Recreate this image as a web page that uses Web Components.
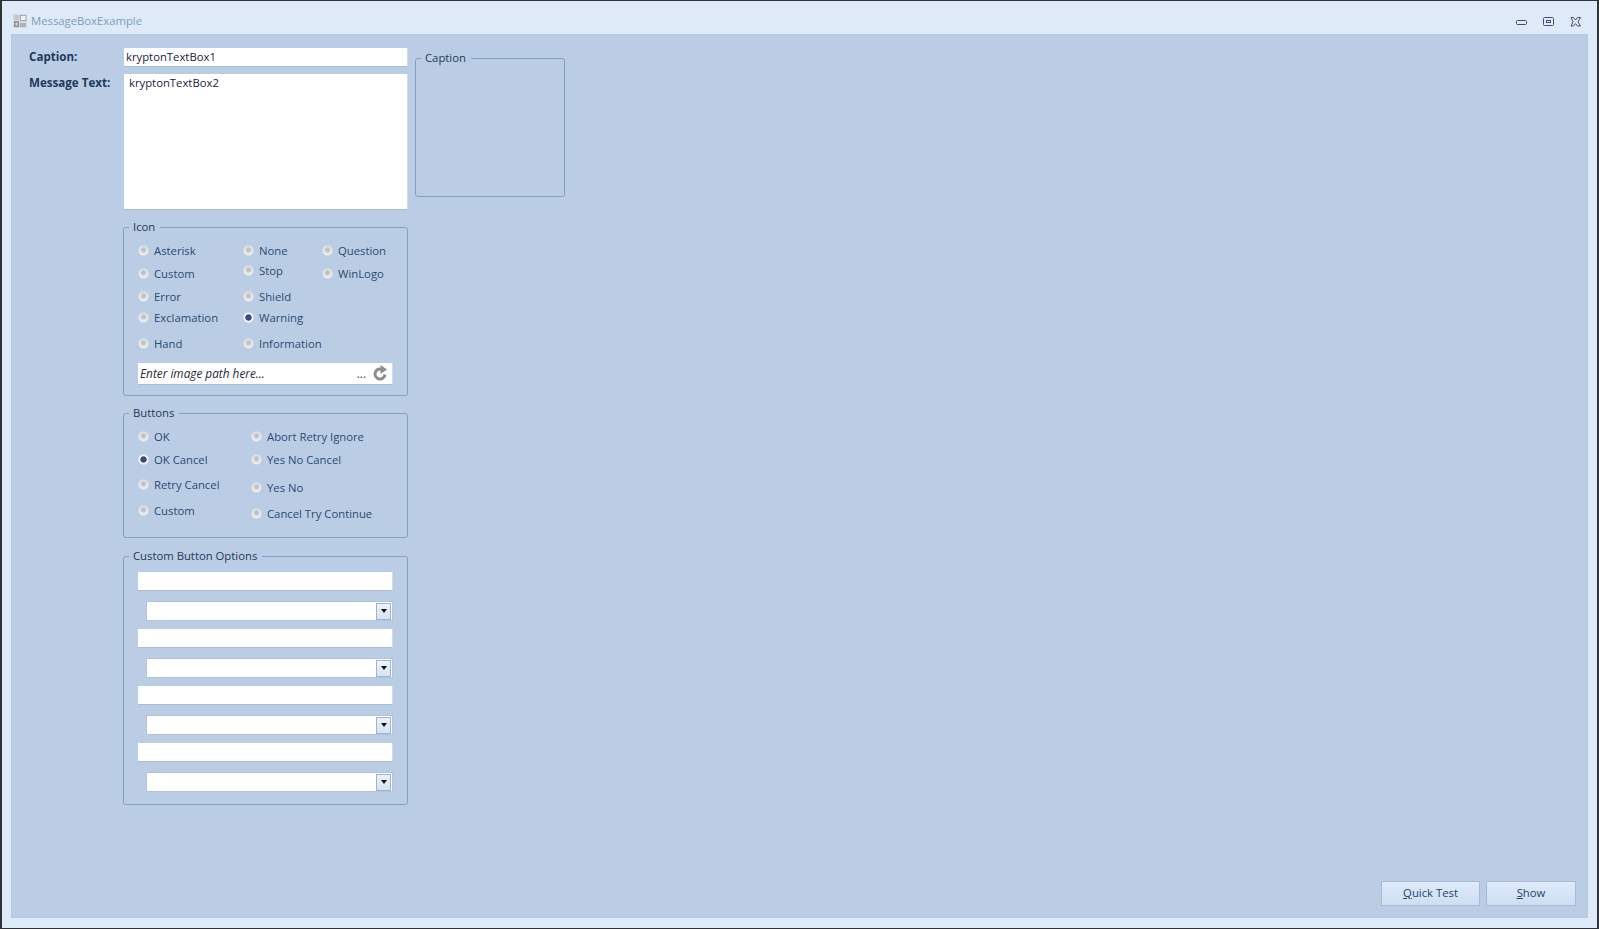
<!DOCTYPE html>
<html lang="en"><head><meta charset="utf-8"><title>MessageBoxExample</title>
<style>
html,body{margin:0;height:100%;overflow:hidden;background:#2f3338}
body{font:11.3px "Open Sans","Noto Sans",sans-serif;color:#1e395b}
</style></head><body>
<template id="t-window"><style>
:host{display:flex;flex-direction:column;box-sizing:border-box;width:1599px;height:929px;padding:1px 2px 1px 2px;background:#2f3338}
.frame{flex:1;display:flex;flex-direction:column;background:#deeaf7;min-height:0}
.bar{display:flex;align-items:center;box-sizing:border-box;height:33px;padding:6px 0 0 11px;flex:none}
.ttl{margin-left:4px;color:#7f9cc0;font-size:11.3px;flex:1}
.wb{display:flex;align-items:center;gap:15px;margin-right:15px;margin-top:4px}
.body{flex:1;margin:0 9px 10px 9px;background:#bbcde4;box-shadow:inset 0 0 0 1px #b7cae2;min-height:0;display:flex;flex-direction:column}
svg{display:block}
</style><div class="frame"><div class="bar">
<svg width="14" height="14" viewBox="0 0 14 14"><rect width="14" height="14" fill="#d3dae2"/><rect x="1" y="1" width="5" height="5" fill="#c3c8ce"/><rect x="7.500" y="1.500" width="5.500" height="5" fill="#edf1f5" stroke="#a4abb3"/><rect x="1" y="7" width="5" height="6" fill="#8d9299"/><rect x="2.500" y="8.500" width="2" height="3" fill="#d5d8dc"/><rect x="7" y="9" width="6" height="4" fill="#adb3ba"/></svg>
<span class="ttl"><slot name="title"></slot></span>
<div class="wb" aria-hidden="true">
<svg width="12" height="6" viewBox="0 0 12 6"><rect x=".5" y=".5" width="10" height="4" rx="1" fill="#deeaf7" stroke="#4d4870"/></svg>
<svg width="12" height="10" viewBox="0 0 12 10" style="margin-top:-1px"><rect x=".5" y=".5" width="10" height="8" rx="1" fill="none" stroke="#4d4870"/><rect x="3.5" y="3.5" width="4" height="2" fill="none" stroke="#4d4870"/></svg>
<svg width="12" height="10" viewBox="0 0 12 10" style="margin-top:-1px"><path d="M1 .5h2.500L5.500 3 7.500.5H10.500L8 4.800 10.500 9H7.500L5.500 6.600 3.500 9H1L3 4.800z" fill="#deeaf7" stroke="#4d4870"/></svg>
</div></div><div class="body"><slot></slot></div></div></template>

<template id="t-group"><style>
:host{display:block;box-sizing:border-box;position:relative;border:1px solid #839fc8;border-radius:3px}
.lg{position:absolute;left:5px;top:-9px;height:16px;line-height:16px;padding:0 var(--lgr,5px) 0 4px;background:#bbcde4;white-space:nowrap}
</style><span class="lg"><slot name="legend"></slot></span><slot></slot></template>

<template id="t-radio"><style>
:host{display:flex;align-items:center;height:16px;white-space:nowrap;color:#2b4a72}
i{display:block;box-sizing:border-box;width:11px;height:11px;border-radius:50%;margin:1px 5px 0 0;flex:none;border:1px solid #d3dae3;background:radial-gradient(circle at 50% 42%,#b4b9bf 0,#c6cacf 28%,#eceef0 60%,#fff 85%)}
:host([checked]) i{background:radial-gradient(circle,#3e4889 0,#3e4889 44%,#f4f5f8 56%,#fff 100%);border-color:#dfe4ea}
</style><i></i><span><slot></slot></span></template>

<template id="t-text"><style>
:host{display:flex;align-items:center;box-sizing:border-box;background:#fff;height:19px;border-bottom:1px solid #a9bdd8;border-right:1px solid #cfdcec;padding:0 2px}
</style><slot></slot></template>

<template id="t-combo"><style>
:host{display:flex;justify-content:flex-end;align-items:center;box-sizing:border-box;background:#fff;height:20px;border:1px solid #b2c4dd;padding-right:1px}
b{display:flex;align-items:center;justify-content:center;box-sizing:border-box;width:15px;height:17px;background:linear-gradient(#edf3fb,#d6e3f4);border:1px solid #9fb3cf}
s{display:block;width:0;height:0;border:3.500px solid transparent;border-top:4px solid #111;border-bottom:0}
</style><b><s></s></b></template>

<template id="t-button"><style>
:host{display:flex;align-items:center;justify-content:center;box-sizing:border-box;height:25px;padding-bottom:3px;border:1px solid #a7bbd5;background:linear-gradient(#dfeafa,#cddff3);color:#24426b}
u{text-underline-offset:2px}
</style><slot></slot></template>

<template id="t-main"><style>
:host{display:flex;flex:1;flex-direction:column;padding:14px 12px 12px 18px;min-height:0}
.top{flex:1;display:flex;min-height:0}
.labels{width:94px;flex:none;font-weight:700;color:#1e395b;font-size:11.6px}
.labels div{height:18px;line-height:17px}
.labels div+div{margin-top:8px}
.col{width:285px;flex:none;display:flex;flex-direction:column}
.cap{width:150px;height:139px;margin:10px 0 0 7px}
.tb{color:#1e1a3a;padding-bottom:1px}
.msg{display:block;background:#fff;height:136px;margin:7px 0 0 1px;padding:0 5px;box-sizing:border-box;color:#1e1a3a;border-bottom:1px solid #a9bdd8;border-right:1px solid #cfdcec;width:284px;line-height:17px}
.first{width:284px;height:19px;margin-left:1px}
.radios{display:flex;padding:14px 0 0 14px}
.radios>div{display:flex;flex-direction:column}
.c105{width:105px}.c79{width:79px}.c113{width:113px}
.path{width:255px;height:22px;margin:12px 0 0 14px;padding:0 4px 2px 2px;font-style:italic;font-size:11.8px;color:#2a2a3a;justify-content:space-between}
.path span.r{display:flex;align-items:center;gap:7px;font-style:normal;color:#34527e}
.stack{padding-top:15px;display:flex;flex-direction:column;align-items:flex-start;padding-left:14px}
.stack x-text{width:255px;margin-top:8px}
.stack x-text:first-child{margin-top:0}
.stack x-combo{width:247px;margin:10px 0 0 8px}
.g1{height:169px;margin-top:17px;width:285px}
.g2{height:125px;margin-top:17px;width:285px}
.g3{height:249px;margin-top:18px;width:285px}
.foot{display:flex;justify-content:flex-end;gap:6px;flex:none}
.foot x-button:first-child{width:99px}.foot x-button:last-child{width:90px}
</style>
<div class="top">
<div class="labels"><div>Caption:</div><div>Message Text:</div></div>
<div class="col">
<x-text class="first tb">kryptonTextBox1</x-text>
<div class="msg">kryptonTextBox2</div>
<x-group class="g1"><span slot="legend">Icon</span>
<div class="radios">
<div class="c105"><x-radio>Asterisk</x-radio><x-radio style="margin-top:7px">Custom</x-radio><x-radio style="margin-top:7px">Error</x-radio><x-radio style="margin-top:5px">Exclamation</x-radio><x-radio style="margin-top:10px">Hand</x-radio></div>
<div class="c79"><x-radio>None</x-radio><x-radio style="margin-top:4px">Stop</x-radio><x-radio style="margin-top:10px">Shield</x-radio><x-radio style="margin-top:5px" checked>Warning</x-radio><x-radio style="margin-top:10px">Information</x-radio></div>
<div><x-radio>Question</x-radio><x-radio style="margin-top:7px">WinLogo</x-radio></div>
</div>
<x-text class="path"><span>Enter image path here...</span><span class="r"><span>...</span><svg width="15" height="16" viewBox="0 0 15 16"><path d="M12 9.500A5 5 0 1 1 8.500 4.200" fill="none" stroke="#8d8d8d" stroke-width="3"/><path d="M7.500 0l6.500 4.500-6.500 4.500z" fill="#8d8d8d"/></svg></span></x-text>
</x-group>
<x-group class="g2"><span slot="legend">Buttons</span>
<div class="radios">
<div class="c113"><x-radio>OK</x-radio><x-radio style="margin-top:7px" checked>OK Cancel</x-radio><x-radio style="margin-top:9px">Retry Cancel</x-radio><x-radio style="margin-top:10px">Custom</x-radio></div>
<div><x-radio>Abort Retry Ignore</x-radio><x-radio style="margin-top:7px">Yes No Cancel</x-radio><x-radio style="margin-top:12px">Yes No</x-radio><x-radio style="margin-top:10px">Cancel Try Continue</x-radio></div>
</div>
</x-group>
<x-group class="g3"><span slot="legend">Custom Button Options</span>
<div class="stack">
<x-text></x-text><x-combo></x-combo><x-text></x-text><x-combo></x-combo><x-text></x-text><x-combo></x-combo><x-text></x-text><x-combo></x-combo>
</div>
</x-group>
</div>
<x-group class="cap" style="--lgr:5px"><span slot="legend">Caption</span></x-group>
</div>
<div class="foot"><x-button><span><u>Q</u>uick Test</span></x-button><x-button><span><u>S</u>how</span></x-button></div>
</template>

<x-window><span slot="title">MessageBoxExample</span><x-main></x-main></x-window>
<script>
function def(tag,id){
  customElements.define(tag,class extends HTMLElement{
    constructor(){super();this.attachShadow({mode:'open'}).appendChild(document.getElementById(id).content.cloneNode(true));}
  });
}
def('x-group','t-group');def('x-radio','t-radio');def('x-text','t-text');def('x-combo','t-combo');def('x-button','t-button');def('x-main','t-main');def('x-window','t-window');
</script>
</body></html>
